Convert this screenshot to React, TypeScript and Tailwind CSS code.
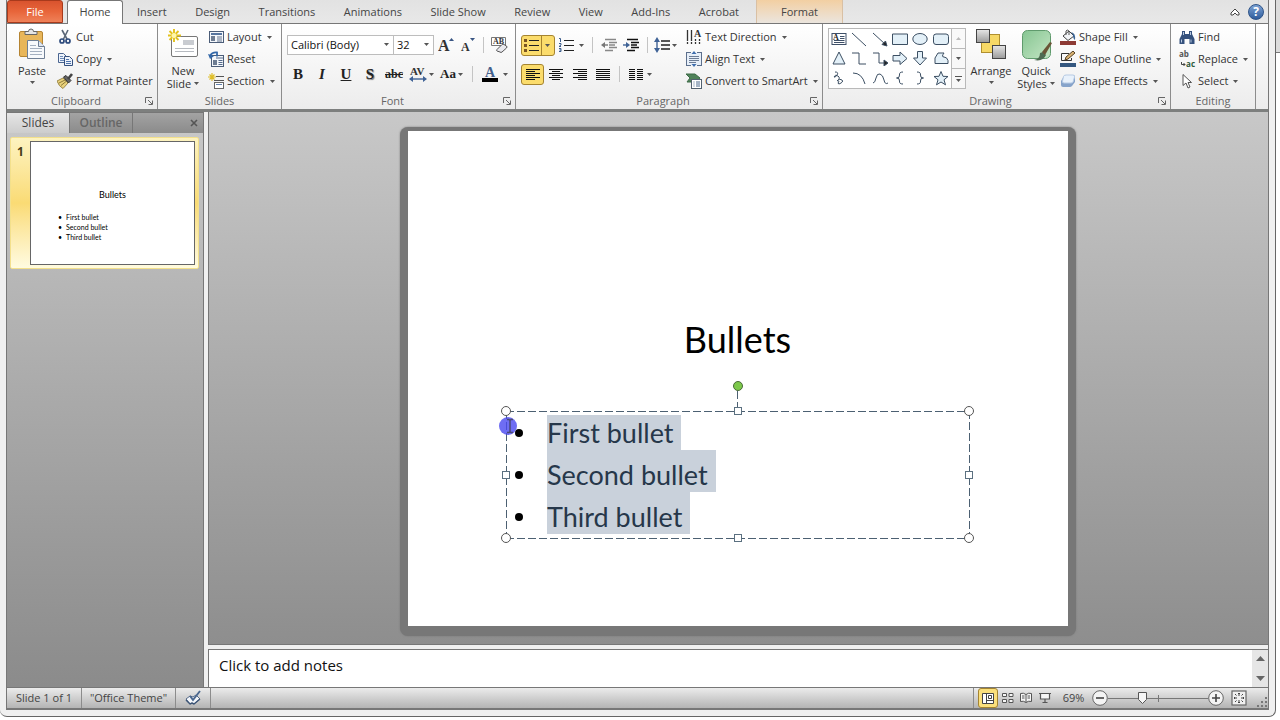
import React from 'react';

const tabs = ['Insert', 'Design', 'Transitions', 'Animations', 'Slide Show', 'Review', 'View', 'Add-Ins', 'Acrobat'];
const bullets = ['First bullet', 'Second bullet', 'Third bullet'];

function Caret({ className = '' }: { className?: string }) {
  return (
    <svg viewBox="0 0 5 3" className={`w-[5px] h-[3px] shrink-0 ${className}`}>
      <path d="M0 0h5L2.5 3z" fill="#555" />
    </svg>
  );
}

function Svg({ children, className = 'size-4' }: { children: React.ReactNode; className?: string }) {
  return (
    <svg viewBox="0 0 16 16" fill="none" className={`shrink-0 ${className}`}>
      {children}
    </svg>
  );
}

interface GroupProps {
  label: string;
  className: string;
  launcher?: boolean;
  children: React.ReactNode;
}

function Group({ label, className, launcher = true, children }: GroupProps) {
  return (
    <section aria-label={label} className={`flex flex-col shrink-0 border-r border-[#8c8c8c] ${className}`}>
      <div className="flex h-[69px] pt-[2px]">{children}</div>
      <div className="flex items-center h-4 pr-1 text-[#666]">
        <span className={`flex-1 text-center ${launcher ? '' : 'pl-1'}`}>{label}</span>
        {launcher && (
          <button aria-label={`${label} options`}>
            <svg viewBox="0 0 8 8" fill="none" className="size-2">
              <path d="M.5 6V.5H7M3 3l4 4M7.500 3.500v4h-4" stroke="#666" />
            </svg>
          </button>
        )}
      </div>
    </section>
  );
}

// Small ribbon command: icon, caption, optional arrow
function Command({ icon, label, caret = false }: { icon: React.ReactNode; label: string; caret?: boolean }) {
  return (
    <button className="flex items-center h-[22px] gap-[3px] whitespace-nowrap">
      {icon}
      <span>{label}</span>
      {caret && <Caret className="ml-[2px]" />}
    </button>
  );
}

function Tool({ label, className = 'w-6', children }: { label: string; className?: string; children: React.ReactNode }) {
  return (
    <button aria-label={label} className={`flex items-center justify-center h-5 shrink-0 ${className}`}>
      {children}
    </button>
  );
}

function Divider() {
  return <span className="w-px h-4 mx-[5px] bg-[#c4c4c4] shrink-0" />;
}

const lines = {
  left: 'M1 3.500h14M1 5.500h9M1 7.500h14M1 9.500h9M1 11.500h14M1 13.500h9',
  center: 'M1 3.500h14M4 5.500h8M1 7.500h14M4 9.500h8M1 11.500h14M4 13.500h8',
  right: 'M1 3.500h14M6 5.500h9M1 7.500h14M6 9.500h9M1 11.500h14M6 13.500h9',
  justify: 'M1 3.500h14M1 5.500h14M1 7.500h14M1 9.500h14M1 11.500h14M1 13.500h14',
  columns: 'M1 3.500h6M1 5.500h6M1 7.500h6M1 9.500h6M1 11.500h6M1 13.500h6M9 3.500h6M9 5.500h6M9 7.500h6M9 9.500h6M9 11.500h6M9 13.500h6',
};

function Lines({ kind }: { kind: keyof typeof lines }) {
  return (
    <Svg>
      <path d={lines[kind]} stroke="#111" />
    </Svg>
  );
}

function ClipboardGroup() {
  return (
    <Group label="Clipboard" className="w-[151px]">
      <button className="flex flex-col items-center w-[50px] pt-[2px]">
        <svg viewBox="0 0 28 32" className="w-7 h-8" fill="none">
          <rect x="1.500" y="3.500" width="23" height="25" rx="1.500" fill="#e8b65a" stroke="#b58432" />
          <path d="M7 6.500h12V3.500h-3.500a2.500 2.500 0 0 0-5 0H7z" fill="#e4e4e4" stroke="#666" />
          <path d="M9.500 12.500h11l6 6v12h-17z" fill="#f7f9fc" stroke="#6f7f95" />
          <path d="M20.500 12.500v6h6" fill="#dfe6ef" stroke="#6f7f95" />
          <path d="M12 17.500h6M12 20.500h12M12 23.500h12M12 26.500h12" stroke="#a4b0c0" />
        </svg>
        <span className="mt-[3px] leading-4">Paste</span>
        <Caret className="mt-[2px]" />
      </button>
      <div className="flex flex-col items-start">
        <Command
          label="Cut"
          icon={
            <Svg>
              <path d="M5 1l5 9M11 1L6.500 10" stroke="#5a6676" strokeWidth="1.600" />
              <circle cx="5" cy="12" r="2" stroke="#2c4a7c" strokeWidth="1.700" />
              <circle cx="11" cy="12" r="2" stroke="#2c4a7c" strokeWidth="1.700" />
            </Svg>
          }
        />
        <Command
          label="Copy"
          caret
          icon={
            <Svg>
              <path d="M1.500 2.500h5l3 3v6h-8z" fill="#eef3fb" stroke="#4a6590" />
              <path d="M3 5.500h3M3 7.500h4M3 9.500h4" stroke="#6b8ab8" />
              <path d="M7.500 5.500h5l3 3v6h-8z" fill="#eef3fb" stroke="#35507e" />
              <path d="M9 8.500h3M9 10.500h5M9 12.500h5" stroke="#4f74ac" />
            </Svg>
          }
        />
        <Command
          label="Format Painter"
          icon={
            <Svg>
              <path d="M0 8l6-3 5 5-5 5.500q-4-2-6-7.500z" fill="#ead27c" stroke="#9a8748" />
              <path d="M2 10l6-3M4 12.500l5-4" stroke="#8d7a3a" />
              <path d="M6.500 4l2.500-1.500 5 5L11.500 10z" fill="#666" stroke="#333" />
              <path d="M11 6l4-5" stroke="#444" strokeWidth="2.600" />
            </Svg>
          }
        />
      </div>
    </Group>
  );
}

function SlidesGroup() {
  return (
    <Group label="Slides" launcher={false} className="w-[124px]">
      <button className="flex flex-col items-center w-[50px] pt-[3px] leading-[13px]">
        <svg viewBox="0 0 32 32" className="size-8" fill="none">
          <rect x="4.500" y="7.500" width="26" height="20" rx="1.500" fill="#fff" stroke="#777" />
          <rect x="16" y="11" width="11" height="5" fill="#c9ccd1" />
          <path d="M8 19.500h19M8 22.500h19" stroke="#b6bac0" />
          <path d="M7 0v13M1 6.500h13M2.500 2l9 9M11.500 2l-9 9" stroke="#e3c21d" strokeWidth="1.900" />
          <circle cx="7" cy="6.500" r="2.500" fill="#fff6a8" />
        </svg>
        <span className="mt-[3px]">New</span>
        <span className="flex items-center gap-[3px]">
          Slide <Caret />
        </span>
      </button>
      <div className="flex flex-col items-start">
        <Command
          label="Layout"
          caret
          icon={
            <Svg>
              <rect x="1.500" y="2.500" width="14" height="11" fill="#f4f7fb" stroke="#4b5d78" />
              <path d="M3 5h11" stroke="#56759f" strokeWidth="2" />
              <path d="M3 7h4v5H3z" fill="#6d7c92" />
              <path d="M9 8h5M9 10h5M9 12h5" stroke="#65758e" />
            </Svg>
          }
        />
        <Command
          label="Reset"
          icon={
            <Svg>
              <rect x="3.500" y="4.500" width="12" height="11" fill="#f4f7fb" stroke="#4b5d78" />
              <path d="M5 9h4v5H5z" fill="#6d7c92" />
              <path d="M10.500 9.500h4M10.500 11.500h4M10.500 13.500h4M8 7h7" stroke="#53698a" />
              <path d="M2 5q2-4 7-3.500v4" stroke="#3267a8" strokeWidth="1.800" />
              <path d="M0 3l2 5 4-3z" fill="#3267a8" />
            </Svg>
          }
        />
        <Command
          label="Section"
          caret
          icon={
            <Svg>
              <path d="M4 0v8M0 4h8M1.500 1.500l5 5M6.500 1.500l-5 5" stroke="#dfbe27" strokeWidth="1.200" />
              <path d="M8 3.500h8M6 7.500h10" stroke="#555" />
              <rect x="6.500" y="9.500" width="9" height="6" fill="#fff" stroke="#666" />
              <path d="M8 11.500h6" stroke="#6483b0" />
            </Svg>
          }
        />
      </div>
    </Group>
  );
}

function FontGroup() {
  return (
    <Group label="Font" className="w-[234px]">
      <div className="flex flex-col gap-[9px] pt-[9px] pl-1">
        <div className="flex items-center h-5 pl-px">
          <div className="relative">
            <select aria-label="Font" className="appearance-none w-[107px] h-5 pl-[3px] border border-[#bdbdbd] bg-white text-[#111]">
              <option>Calibri (Body)</option>
            </select>
            <Caret className="absolute right-[5px] top-2 pointer-events-none" />
          </div>
          <div className="relative -ml-px">
            <select aria-label="Font size" className="appearance-none w-[41px] h-5 pl-[3px] border border-[#bdbdbd] bg-white text-[#111]">
              <option>32</option>
            </select>
            <Caret className="absolute right-[5px] top-2 pointer-events-none" />
          </div>
          <Tool label="Grow font" className="w-6">
            <svg viewBox="0 0 16 16" className="size-4">
              <text x="0" y="14" fontSize="16" fontWeight="700" fill="#333" fontFamily="Liberation Serif, serif">A</text>
              <path d="M11 4l2.500-3L16 4z" fill="#3a5684" />
            </svg>
          </Tool>
          <Tool label="Shrink font" className="w-5">
            <svg viewBox="0 0 16 16" className="size-4">
              <text x="1" y="14" fontSize="12" fontWeight="700" fill="#333" fontFamily="Liberation Serif, serif">A</text>
              <path d="M10 1h5l-2.500 3z" fill="#3a5684" />
            </svg>
          </Tool>
          <Divider />
          <Tool label="Clear formatting" className="w-5">
            <svg viewBox="0 0 18 16" fill="none" className="w-[18px] h-4">
              <path d="M1.500.5h14v8h-14z" fill="#fff" stroke="#777" />
              <text x="3" y="7" fontSize="8" fontWeight="700" fill="#333" fontFamily="Liberation Serif, serif">AB</text>
              <path d="M7 12.500l5-5q1-1 2 0l2.500 1.500q1 1 0 2L12 15q-1 1-2 0l-3-1q-1-.5 0-1.500z" fill="#e9e9ee" stroke="#555" />
            </svg>
          </Tool>
        </div>
        <div className="flex items-center h-5 font-['Liberation_Serif',serif] text-[15px] font-bold text-[#222]">
          <Tool label="Bold">B</Tool>
          <Tool label="Italic"><i>I</i></Tool>
          <Tool label="Underline"><u>U</u></Tool>
          <Tool label="Shadow"><span className="[text-shadow:1px_1px_1px_#777]">S</span></Tool>
          <Tool label="Strikethrough"><s className="text-[12px]">abc</s></Tool>
          <Tool label="Character spacing" className="w-[30px] gap-[2px]">
            <svg viewBox="0 0 18 16" className="w-[18px] h-4">
              <text x="1" y="9" fontSize="11" fontWeight="700" fill="#333" fontFamily="Liberation Serif, serif">AV</text>
              <path d="M3 13h12" stroke="#3f6296" strokeWidth="1.400" />
              <path d="M4 10v6L0 13zM14 10v6l4-3z" fill="#3f6296" />
            </svg>
            <Caret />
          </Tool>
          <Tool label="Change case" className="w-[31px] gap-[2px]">
            <span className="text-[13px]">Aa</span>
            <Caret />
          </Tool>
          <Divider />
          <Tool label="Font color" className="w-[34px] gap-[5px]">
            <svg viewBox="0 0 16 18" className="w-4 h-[18px]">
              <text x="3" y="12" fontSize="14" fontWeight="700" fill="#44608c" fontFamily="Liberation Serif, serif">A</text>
              <path d="M0 13h16v4H0z" fill="#000" />
            </svg>
            <Caret />
          </Tool>
        </div>
      </div>
    </Group>
  );
}

function ParagraphGroup() {
  return (
    <Group label="Paragraph" className="w-[307px]">
      <div className="flex flex-col gap-[9px] pt-[9px] pl-[5px] w-[170px]">
        <div className="flex items-center h-5">
          <Tool label="Bullets" className="w-[34px] h-[21px] border border-[#a58430] rounded-[3px] bg-[#fbdc6c]">
            <Svg className="size-4 mr-[2px]">
              <path d="M6 3.500h10M6 8.500h10M6 13.500h10" stroke="#222" />
              <path d="M1 2h3v3H1zM1 7h3v3H1zM1 12h3v3H1z" fill="#7a5420" />
            </Svg>
            <span className="flex items-center justify-center w-3 h-full border-l border-[#a58430]">
              <Caret />
            </span>
          </Tool>
          <Tool label="Numbering" className="w-8 gap-[5px]">
            <Svg>
              <path d="M6 3.500h10M6 8.500h10M6 13.500h10" stroke="#222" />
              <path d="M1 1.500h1.500V5M1 6.500h2V8L1 9.500h2M1 11.500h2v3H1M1.500 13H3" stroke="#3b5c8c" />
            </Svg>
            <Caret />
          </Tool>
          <Divider />
          <Tool label="Decrease list level" className="w-[22px]">
            <Svg>
              <path d="M4 2.500h11M8 5.500h8M8 8h6M8 10.500h8M4 13.500h8" stroke="#888" strokeWidth="1.300" />
              <path d="M7 8H2" stroke="#777" strokeWidth="1.400" />
              <path d="M4 5v6L0 8z" fill="#777" />
            </Svg>
          </Tool>
          <Tool label="Increase list level" className="w-[22px]">
            <Svg>
              <path d="M4 2.500h11M8 5.500h8M8 8h6M8 10.500h8M4 13.500h8" stroke="#111" strokeWidth="1.400" />
              <path d="M0 8h4" stroke="#3f6296" strokeWidth="1.400" />
              <path d="M3 5v6l4-3z" fill="#3f6296" />
            </Svg>
          </Tool>
          <Divider />
          <Tool label="Line spacing" className="w-6 gap-[2px]">
            <Svg>
              <path d="M7 4h9M7 8h9M7 12h9" stroke="#222" strokeWidth="1.400" />
              <path d="M3 3v10" stroke="#3f6296" strokeWidth="1.400" />
              <path d="M0 5h6L3 0zM0 11h6l-3 5z" fill="#3f6296" />
            </Svg>
            <Caret />
          </Tool>
        </div>
        <div className="flex items-center h-5">
          <Tool label="Align left" className="w-[23px] h-[21px] border border-[#a58430] rounded-[3px] bg-[#fbdc6c]">
            <Lines kind="left" />
          </Tool>
          <Tool label="Center"><Lines kind="center" /></Tool>
          <Tool label="Align right"><Lines kind="right" /></Tool>
          <Tool label="Justify" className="w-[22px]"><Lines kind="justify" /></Tool>
          <Divider />
          <Tool label="Columns" className="w-[30px] gap-[3px]">
            <Lines kind="columns" />
            <Caret />
          </Tool>
        </div>
      </div>
      <div className="flex flex-col items-start">
        <Command
          label="Text Direction"
          caret
          icon={
            <Svg>
              <path d="M1.500 1v11M5.500 1v11M1.500 13v2M5.500 13v2M9.500 10v2M9.500 13v2M13.500 10v2M13.500 13v2" stroke="#333" strokeWidth="1.300" />
              <text x="8" y="8" fontSize="10" fontWeight="700" fill="#333" fontFamily="Liberation Serif, serif">A</text>
            </Svg>
          }
        />
        <Command
          label="Align Text"
          caret
          icon={
            <Svg>
              <path d="M.5 2v13M15.500 2v13M0 1.500h5M11 1.500h5M0 14.500h5M11 14.500h5" stroke="#5c6f8c" />
              <path d="M1 2h14v12H1z" fill="#e6eef8" />
              <path d="M3 5.500h10M3 7.500h10M3 9.500h10M3 11.500h7" stroke="#6b7c95" />
              <path d="M5.500 3h5L8 0zM5.500 13h5L8 16z" fill="#3f6fae" />
            </Svg>
          }
        />
        <Command
          label="Convert to SmartArt"
          caret
          icon={
            <Svg>
              <path d="M0 1h9l5 4-3 4H1l3-4z" fill="#4f8259" stroke="#3c6a46" />
              <rect x="5.500" y="6.500" width="10" height="9" fill="#fff" stroke="#52606e" />
              <path d="M7.500 9h1M7.500 11h1M7.500 13h1M10 9h4M10 11h4M10 13h4" stroke="#4c6b8e" />
            </Svg>
          }
        />
      </div>
    </Group>
  );
}

const shapes = [
  <g key="textbox"><rect x="1" y="2.500" width="14" height="11" fill="#fff" stroke="#3f5068" /><text x="2" y="9" fontSize="8" fontWeight="700" fill="#222" stroke="none" fontFamily="Liberation Serif, serif">A</text><path d="M9 5.500h4.500M9 7.500h4.500M3 9.500h10.500M3 11.500h10.500" stroke="#3f5068" /></g>,
  <path key="line" d="M1 2l14 13" />,
  <g key="arrow"><path d="M1 2l12 11" /><path d="M15 15l-1.500-5-3.500 3.500z" fill="#222" /></g>,
  <path key="rect" d="M.5 3h15v10.500H.5z" fill="#e3f0f8" />,
  <ellipse key="oval" cx="8" cy="8" rx="7.200" ry="5.500" fill="#e3f0f8" />,
  <rect key="round" x=".5" y="3" width="15" height="10.500" rx="2.500" fill="#e3f0f8" />,
  <path key="triangle" d="M8 2l6 12H2z" fill="#e3f0f8" />,
  <path key="elbow" d="M1 3h7v11h7" />,
  <g key="elbow-arrow"><path d="M1 3h6v10h6" /><path d="M12 10v6l4-3z" fill="#222" /></g>,
  <path key="right" d="M1 5.500h7V2l7 6.500-7 6V11H1z" fill="#e3f0f8" />,
  <path key="down" d="M5.500 1.500h5V8h4L8 15 1.500 8h4z" fill="#e3f0f8" />,
  <path key="freeform" d="M2 13.500V8l3-5h6q-3 4 0 4t4 3.500v3z" fill="#e3f0f8" />,
  <path key="scribble" d="M4 2q4 0 2 3t-3 2q1-3 4-1t-1 5q3-3 5-1t-3 4q-2 0 0-3" />,
  <path key="arc" d="M2 3q9 0 12 11" />,
  <path key="curve" d="M1 13Q3 13 4 8t4-4q3 1 4 6t4 3" />,
  <path key="lbrace" d="M11 2Q7 2 7.500 5t-3 3q3.500 0 3 3t3.500 3" />,
  <path key="rbrace" d="M5 2q4 0 3.500 3t3 3q-3.500 0-3 3T5 14" />,
  <path key="star" d="M8 1.500l2 4.800 5 .2-4 3.300 1.500 5L8 12l-4.500 2.800 1.500-5-4-3.300 5-.2z" fill="#e3f0f8" />,
];

function DrawingGroup() {
  return (
    <Group label="Drawing" className="w-[348px]">
      <div className="flex h-[61px] mt-[2px] ml-[5px] border border-[#b9b9b9] bg-white">
        <div className="grid grid-cols-6 w-[122px]">
          {shapes.map((shape, i) => (
            <button key={i} aria-label={`Shape ${i + 1}`} className="flex items-center justify-center">
              <svg viewBox="0 0 16 16" fill="none" stroke="#3c4f63" className="size-4">{shape}</svg>
            </button>
          ))}
        </div>
        <div className="flex flex-col w-[14px] border-l border-[#b9b9b9]">
          <button aria-label="Scroll up" className="flex items-center justify-center flex-1 bg-[#f1f1f1] opacity-40"><Caret className="rotate-180" /></button>
          <button aria-label="Scroll down" className="flex items-center justify-center flex-1 border-y border-[#b9b9b9] bg-[#f8f8f8]"><Caret /></button>
          <button aria-label="More shapes" className="flex flex-col items-center justify-center gap-[2px] flex-1 bg-[#f8f8f8]">
            <span className="w-[7px] h-px bg-[#555]" />
            <Caret />
          </button>
        </div>
      </div>
      <button className="flex flex-col items-center w-[50px] pt-[2px]">
        <svg viewBox="0 0 32 32" className="size-8" fill="none">
          <defs>
            <linearGradient id="tile" x1="0" y1="0" x2="0" y2="1">
              <stop offset="0" stopColor="#e6e6e6" /><stop offset="1" stopColor="#9a9a9a" />
            </linearGradient>
          </defs>
          <rect x="6.500" y="6.500" width="18" height="18" fill="#f6d866" stroke="#b08f2f" />
          <rect x="1.500" y="1.500" width="13" height="13" fill="url(#tile)" stroke="#444" />
          <rect x="17.500" y="17.500" width="13" height="13" fill="url(#tile)" stroke="#444" />
        </svg>
        <span className="mt-[3px] leading-4">Arrange</span>
        <Caret className="mt-[2px]" />
      </button>
      <button className="flex flex-col items-center w-10 pt-[3px] leading-[13px]">
        <svg viewBox="0 0 32 32" className="size-8" fill="none">
          <defs>
            <linearGradient id="leaf" x1="0" y1="0" x2="1" y2="1">
              <stop offset="0" stopColor="#86c592" /><stop offset="1" stopColor="#c4e6c4" />
            </linearGradient>
          </defs>
          <rect x="2.500" y="1.500" width="28" height="28" rx="5" fill="url(#leaf)" stroke="#5f9a6c" />
          <path d="M14 31q6-1 6-7l3-1 3 3q-3 7-12 5z" fill="#4e6b52" />
          <path d="M22 23l8-10 2 1-7 12z" fill="#6a5436" />
        </svg>
        <span className="mt-[3px]">Quick</span>
        <span className="flex items-center gap-[3px]">Styles <Caret /></span>
      </button>
      <div className="flex flex-col items-start ml-[4px]">
        <Command
          label="Shape Fill"
          caret
          icon={
            <Svg>
              <path d="M0 12h16v4H0z" fill="#8d3a34" />
              <path d="M3 7l6-5 5 5-6 4.500z" fill="#f2f4f7" stroke="#444" />
              <path d="M6 6V2q1-2 3 0v4" stroke="#555" />
              <path d="M11 3q5 1 4 8-2-1-2-5z" fill="#3b6596" />
            </Svg>
          }
        />
        <Command
          label="Shape Outline"
          caret
          icon={
            <Svg>
              <path d="M0 12h16v4H0z" fill="#34577f" />
              <path d="M9 2.500H1.500v7h10V7" stroke="#333" />
              <path d="M5 9l1-3 7-6 2 2-7 6z" fill="#d8b173" stroke="#554225" />
            </Svg>
          }
        />
        <Command
          label="Shape Effects"
          caret
          icon={
            <Svg>
              <path d="M1 8l3-5q1-1 2-1h7q2 0 2 2v5l-3 4q-1 1-2 1H3q-2 0-2-2z" fill="#86a3ca" />
              <path d="M3.500 3.500Q4 2 6 2h7q2 0 1.500 2L13 9q-.5 1-2 1H4Q2 10 2.500 8z" fill="#e8f1fb" stroke="#b7cbe4" />
            </Svg>
          }
        />
      </div>
    </Group>
  );
}

function EditingGroup() {
  return (
    <Group label="Editing" launcher={false} className="w-[85px]">
      <div className="flex flex-col items-start pl-2">
        <Command
          label="Find"
          icon={
            <Svg>
              <path d="M3 2h3v3h4V2h3v3l2.500 5v5h-5v-5h-5v5h-5v-5L3 5z" fill="#35517d" />
              <path d="M2.500 10.500v3M12 10.500v3M4.500 3v3M11.500 3v3" stroke="#b7c9e2" />
            </Svg>
          }
        />
        <Command
          label="Replace"
          caret
          icon={
            <span className="flex flex-col w-4 h-5 shrink-0 text-[8px] leading-[10px] font-bold text-[#555]">
              <span className="self-start">ab</span>
              <span className="flex items-center self-end">
                <svg viewBox="0 0 5 5" fill="none" className="size-[5px]">
                  <path d="M.5 0v2.500H4M2.500 1l1.500 1.500L2.500 4" stroke="#444" />
                </svg>
                <span className="text-[#2d5a3c]">ac</span>
              </span>
            </span>
          }
        />
        <Command
          label="Select"
          caret
          icon={
            <Svg>
              <path d="M4 1.500v11l3-2.500 2 5 2-1-2-4.500h3.500z" fill="#fff" stroke="#555" />
            </Svg>
          }
        />
      </div>
    </Group>
  );
}

function RibbonTabs() {
  return (
    <nav className="flex items-stretch h-6 border-b border-[#777] bg-linear-to-b from-[#e2e2e2] to-[#e8e8e8] text-[#444]">
      <button className="w-14 pt-px border border-[#a83a1c] rounded-t-[3px] bg-linear-to-b from-[#d9532e] via-[#e8653a] to-[#ef8158] text-white">File</button>
      <button className="w-[56px] ml-1 -mb-px border border-b-0 border-[#777] rounded-t-[3px] bg-white">Home</button>
      <div className="flex justify-between w-[630px] pt-px">
        {tabs.map(tab => (
          <button key={tab} className="px-[14px] whitespace-nowrap">{tab}</button>
        ))}
      </div>
      <button className="w-[87px] ml-[3px] pt-px border-x border-[#d9c0a4] bg-linear-to-b from-[#f2cfa2] to-[#ebe5de]">Format</button>
      <div className="flex flex-1 items-center justify-end gap-2 pr-1">
        <button aria-label="Minimize ribbon">
          <svg viewBox="0 0 10 8" fill="none" className="w-[10px] h-2">
            <path d="M1 5l4-4 4 4v2H7L5 5 3 7H1z" fill="#fff" stroke="#444" />
          </svg>
        </button>
        <button aria-label="Help" className="size-4 rounded-full border border-[#2f5488] bg-linear-to-b from-[#7da3d4] to-[#2f5c9c] text-white text-[12px] leading-[14px] font-bold">?</button>
      </div>
    </nav>
  );
}

function SlidePanel() {
  return (
    <aside className="flex flex-col w-[197px] shrink-0 border-t border-r border-[#777] bg-linear-to-b from-[#c9c9c9] to-[#8b8b8b]">
      <div className="flex h-5 text-[12px] text-[#444]">
        <button className="w-[62px] bg-linear-to-b from-[#e6e6e6] to-[#cdcdcd]">Slides</button>
        <button className="w-[64px] border-x border-[#777] bg-linear-to-b from-[#a3a3a3] to-[#8b8b8b] font-semibold text-[#666]">Outline</button>
        <div className="flex flex-1 items-center justify-end pr-[5px] bg-linear-to-b from-[#a3a3a3] to-[#8b8b8b]">
          <button aria-label="Close panel">
            <svg viewBox="0 0 8 8" className="size-2">
              <path d="M1 1l6 6M7 1L1 7" stroke="#555" strokeWidth="1.600" />
            </svg>
          </button>
        </div>
      </div>
      <div className="flex mt-1 ml-[3px] mr-1 p-[3px] rounded-[2px] border border-[#f3e08c] bg-linear-to-b from-[#fdf3c0] via-[#fadb74] to-[#fffbe0]">
        <span className="w-4 pl-[3px] pt-[3px] text-[12px] leading-4 font-bold text-[#443a18]">1</span>
        <div className="flex flex-col flex-1 aspect-[4/3] border border-[#666] bg-white font-['Lato',sans-serif] text-black">
          <p className="pt-12 text-center text-[9px] leading-[10px]">Bullets</p>
          <ul className="pt-3 pl-[27px] text-[7px] leading-[10px]">
            {bullets.map(item => (
              <li key={item} className="flex gap-1"><span>•</span>{item}</li>
            ))}
          </ul>
        </div>
      </div>
    </aside>
  );
}

// Dashed frame with resize handles around the active text box
function SelectionFrame() {
  const handle = 'absolute size-2 border border-[#5b7080] bg-white';
  const corner = 'absolute size-[10px] rounded-full border border-[#555] bg-white';
  return (
    <>
      <svg className="absolute inset-0 size-full overflow-visible pointer-events-none" stroke="#4c6072" strokeDasharray="8 3" shapeRendering="crispEdges">
        <line x1="0" y1="0" x2="100%" y2="0" />
        <line x1="0" y1="100%" x2="100%" y2="100%" />
        <line x1="0" y1="0" x2="0" y2="100%" />
        <line x1="100%" y1="0" x2="100%" y2="100%" />
        <line x1="50%" y1="-20" x2="50%" y2="0" />
      </svg>
      <span className={`${corner} -left-[5px] -top-[5px]`} />
      <span className={`${corner} -right-[5px] -top-[5px]`} />
      <span className={`${corner} -left-[5px] -bottom-[5px]`} />
      <span className={`${corner} -right-[5px] -bottom-[5px]`} />
      <span className={`${handle} left-1/2 -ml-1 -top-1`} />
      <span className={`${handle} left-1/2 -ml-1 -bottom-1`} />
      <span className={`${handle} top-1/2 -mt-1 -left-1`} />
      <span className={`${handle} top-1/2 -mt-1 -right-1`} />
      <span className="absolute left-1/2 -ml-[5px] -top-[30px] size-[10px] rounded-full border border-[#4a6a3a] bg-[#7cc84a]" />
      <span className="absolute -left-[7px] top-[6px] flex items-center justify-center size-[18px] rounded-full bg-[#4a48f0]/80">
        <svg viewBox="0 0 8 16" fill="none" className="w-2 h-4 ml-1">
          <path d="M1 1.500h2l1 1 1-1h2M4 2.500v11M1 14.500h2l1-1 1 1h2" stroke="#4a4a78" strokeWidth="1.500" />
        </svg>
      </span>
    </>
  );
}

function Workspace() {
  return (
    <main className="flex flex-1 flex-col min-w-0">
      <div className="flex flex-1 items-center justify-center pl-3 pr-[14px] pt-[15px] pb-2 border-l border-b border-[#777] bg-linear-to-b from-[#c8c8c8] to-[#8e8e8e]">
        <div className="w-full max-w-[676px] px-2 pt-1 pb-[10px] rounded-[8px] bg-[#777] shadow-[0_0_2px_0_#777]">
          <article className="aspect-[4/3] bg-white font-['Lato',sans-serif]">
            <h1 className="pt-[186px] text-center text-[36px] leading-[44px] text-black">Bullets</h1>
            <div className="relative w-[463px] max-w-full mx-auto mt-[50px] py-1 pl-[9px]">
              <ul className="text-[27px] leading-[35px] text-[#26374a]">
                {bullets.map((item, i) => (
                  <li key={item} className={`flex items-center ${i === 0 ? 'h-[35px]' : 'h-[42px]'}`}>
                    <span className={`size-2 mr-6 rounded-full bg-black ${i === 0 ? '' : 'mt-[7px]'}`} />
                    <span className={`pr-2 bg-[#c9d1db] ${i === 0 ? '' : 'pt-[7px]'}`}>{item}</span>
                  </li>
                ))}
              </ul>
              <SelectionFrame />
            </div>
          </article>
        </div>
      </div>
      <div className="flex mt-1 h-[38px] border-t border-l border-[#777] bg-white">
        <textarea
          aria-label="Notes"
          placeholder="Click to add notes"
          className="flex-1 pt-[4px] pl-[10px] resize-none outline-none text-[15px] leading-[22px] placeholder:text-[#111]"
        />
        <div className="flex flex-col justify-between items-center w-4 py-[6px] bg-[#e6e6e6]">
          <button aria-label="Scroll notes up">
            <svg viewBox="0 0 9 5" className="w-[9px] h-[5px]"><path d="M0 5h9L4.500 0z" fill="#666" /></svg>
          </button>
          <button aria-label="Scroll notes down">
            <svg viewBox="0 0 9 5" className="w-[9px] h-[5px]"><path d="M0 0h9L4.500 5z" fill="#666" /></svg>
          </button>
        </div>
      </div>
    </main>
  );
}

function StatusBar() {
  return (
    <footer className="flex items-center h-[23px] border-t border-b-2 border-[#777] bg-linear-to-b from-[#ececec] to-[#b4b4b4] text-[#444]">
      <span className="flex items-center justify-center w-[75px] h-full border-r border-[#8c8c8c]">Slide 1 of 1</span>
      <span className="flex items-center justify-center w-[94px] h-full border-r border-[#8c8c8c]">"Office Theme"</span>
      <button aria-label="Spelling" className="flex items-center justify-center w-[35px] h-full border-r border-[#8c8c8c]">
        <Svg>
          <path d="M1 9l4-3 3 1 3-2 4 4-6 5-2-1-2 1z" fill="#f4f7fb" stroke="#566a88" />
          <path d="M1 10l4 4 2-1 2 1 6-5" stroke="#3c5475" strokeWidth="1.400" />
          <path d="M5 6l3 4 7-9" stroke="#4a678f" strokeWidth="1.900" />
        </Svg>
      </button>
      <div className="flex items-center h-full ml-auto pl-1 border-l border-[#8c8c8c]">
        <button aria-label="Normal view" className="flex items-center justify-center size-5 mr-[1px] border border-[#a58430] rounded-[3px] bg-[#fbe07c]">
          <svg viewBox="0 0 12 11" fill="none" stroke="#444" className="w-3 h-[11px]"><path d="M.5.5h11v10H.5zM4.500.5v10M4.500 7.500h7" fill="#fff" /><path d="M6.500 2.500h3v3h-3z" /></svg>
        </button>
        <Tool label="Slide sorter" className="w-[18px]">
          <svg viewBox="0 0 12 12" fill="#f6f6f6" stroke="#555" className="size-3"><path d="M.5 1.500h4v3h-4zM7 1.500h4v3H7zM.5 7.500h4v3h-4zM7 7.500h4v3H7z" /></svg>
        </Tool>
        <Tool label="Reading view" className="w-[18px]">
          <svg viewBox="0 0 12 12" fill="#f6f6f6" stroke="#555" className="size-3"><path d="M.5 1.500q3-1 5.500 1 2.500-2 5.500-1v8q-3-1-5.500 1-2.500-2-5.500-1zM6 2.500v8M2 4h2.500M2 6h2.500M7.500 4H10M7.500 6H10" /></svg>
        </Tool>
        <Tool label="Slide show" className="w-5">
          <svg viewBox="0 0 12 12" fill="#f6f6f6" stroke="#555" className="size-3"><path d="M0 1.500h12M1.500 2v5h9V2M6 7v3M3.500 10.500h5" strokeWidth="1.200" /></svg>
        </Tool>
        <button className="w-[37px] text-center">69%</button>
        <button aria-label="Zoom out">
          <Svg><circle cx="8" cy="8" r="7.300" fill="#f4f4f4" stroke="#666" /><path d="M4 8h8" stroke="#444" strokeWidth="1.600" /></Svg>
        </button>
        <div className="relative w-[100px] h-4">
          <svg viewBox="0 0 100 16" fill="none" stroke="#777" className="w-full h-4">
            <path d="M0 8.500h100M50.500 5v7" />
            <path d="M30.500 2.500h8v7l-4 4-4-4z" fill="#f6f6f6" stroke="#555" />
          </svg>
          <input type="range" aria-label="Zoom" min="10" max="400" defaultValue="69" className="absolute inset-0 size-full opacity-0" />
        </div>
        <button aria-label="Zoom in">
          <Svg><circle cx="8" cy="8" r="7.300" fill="#f4f4f4" stroke="#666" /><path d="M4 8h8M8 4v8" stroke="#444" strokeWidth="1.600" /></Svg>
        </button>
        <button aria-label="Fit slide to window" className="ml-[7px]">
          <Svg>
            <rect x="1" y="1" width="14" height="14" fill="#f0f0f0" stroke="#666" strokeWidth="1.200" />
            <path d="M8 3v3M8 10v3M3 8h3M10 8h3M4 4l1.500 1.500M12 4l-1.500 1.500M4 12l1.500-1.500M12 12l-1.500-1.500M7 4l1-1 1 1M7 12l1 1 1-1M4 7L3 8l1 1M12 7l1 1-1 1" stroke="#444" />
          </Svg>
        </button>
        <svg viewBox="0 0 12 12" className="self-end size-3 ml-[9px]" fill="#777">
          <path d="M9 1h2v2H9zM5 5h2v2H5zM9 5h2v2H9zM1 9h2v2H1zM5 9h2v2H5zM9 9h2v2H9z" />
        </svg>
      </div>
    </footer>
  );
}

export default function App() {
  return (
    <div className="flex min-h-screen pb-[3px] bg-white font-['Open_Sans','Liberation_Sans',sans-serif] text-[11px] text-[#333]">
      <div className="flex flex-1 flex-col min-w-0 pl-[6px] pr-[6px] pb-[6px] border-r border-b border-[#666] rounded-b-[7px] bg-[#f0f0f0]">
        <div className="flex flex-1 flex-col border-x border-[#777]">
          <RibbonTabs />
          <div className="flex h-[88px] border-b-3 border-[#7d7f7e] bg-linear-to-b from-white to-[#ececec] overflow-hidden">
            <ClipboardGroup />
            <SlidesGroup />
            <FontGroup />
            <ParagraphGroup />
            <DrawingGroup />
            <EditingGroup />
          </div>
          <div className="flex flex-1 gap-[4px]">
            <SlidePanel />
            <Workspace />
          </div>
          <StatusBar />
        </div>
      </div>
      <div className="w-1 shrink-0">
        <div className="h-[53px] border-b border-[#777] bg-[#dcdcdc]" />
      </div>
    </div>
  );
}
